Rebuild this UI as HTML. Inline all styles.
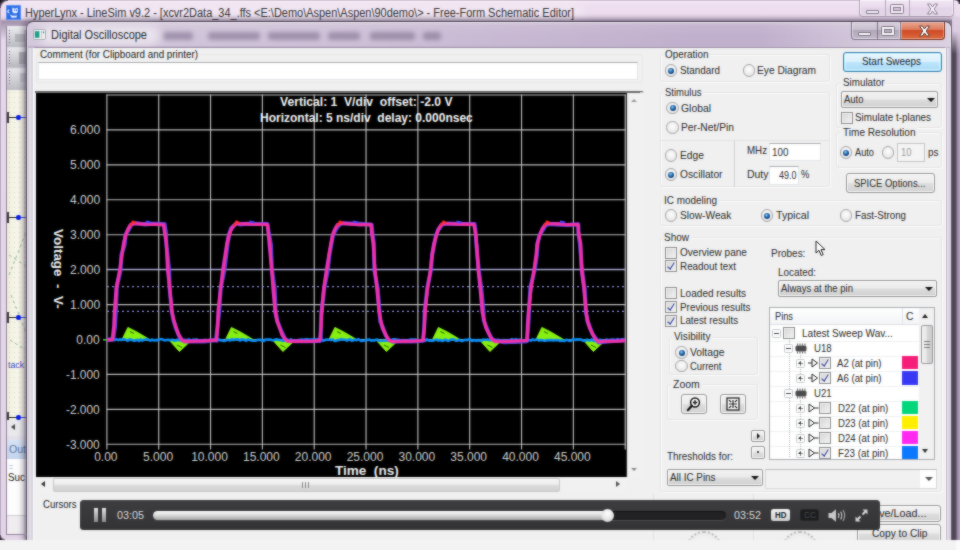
<!DOCTYPE html>
<html><head><meta charset="utf-8"><title>Digital Oscilloscope</title>
<style>
html,body{margin:0;padding:0;}
body{width:960px;height:550px;overflow:hidden;position:relative;background:#f3f3f3;font-family:"Liberation Sans", sans-serif;}
#root{position:absolute;left:0;top:0;width:960px;height:550px;overflow:hidden;}
.t{position:absolute;white-space:pre;line-height:1;transform:translateY(-50%);transform-origin:0 50%;margin-top:-0.4px;font-family:"Liberation Sans", sans-serif;}

.gb{position:absolute;border:1px solid #e4e4e4;box-shadow:inset 1px 1px 0 rgba(255,255,255,.7),1px 1px 0 rgba(255,255,255,.7);border-radius:3px;box-sizing:border-box;}
.wh{position:absolute;background:#fff;border:1px solid #e3e6ea;border-top-color:#abadb3;box-sizing:border-box;}
.btn{position:absolute;box-sizing:border-box;border:1px solid #989898;border-radius:3px;background:linear-gradient(#f4f4f4 0%,#ececec 48%,#dedede 52%,#d2d2d2 100%);box-shadow:inset 0 0 0 1px rgba(255,255,255,.75);}
.cmb{position:absolute;box-sizing:border-box;border:1px solid #989898;border-radius:2px;background:linear-gradient(#f2f2f2 0%,#ebebeb 48%,#dddddd 52%,#cfcfcf 100%);box-shadow:inset 0 0 0 1px rgba(255,255,255,.7);}
.arr{position:absolute;width:0;height:0;border-left:4px solid transparent;border-right:4px solid transparent;border-top:4px solid #111;}
.rd{position:absolute;width:12.5px;height:12.5px;border-radius:50%;box-sizing:border-box;border:1px solid #a6a6a6;background:radial-gradient(circle at 50% 40%,#fdfdfd 0%,#ececec 60%,#d8d8d8 100%);}
.rd.on::after{content:"";position:absolute;left:2.25px;top:2.25px;width:6px;height:6px;border-radius:50%;background:radial-gradient(circle at 42% 36%,#9fd4f4 0%,#2068ac 38%,#0a3266 80%);}
.cb{position:absolute;width:12px;height:12px;box-sizing:border-box;border:1px solid #8e8f8f;background:linear-gradient(135deg,#d4d4d4 0%,#f4f4f4 100%);box-shadow:inset 0 0 0 1px #f0f0f0;}
.cb.on::after{content:"";position:absolute;left:3px;top:0px;width:3px;height:7px;border:solid #2a3a9a;border-width:0 1.6px 1.6px 0;transform:rotate(40deg) skewX(8deg);}

</style></head><body><div id="root">
<div style="position:absolute;left:0px;top:0px;width:960px;height:540px;background:linear-gradient(180deg,#b9a7bf 0px,#f5eaf6 1.5px,#eedff0 4px,#ecdcee 15px,#e2d3e6 18px,#c9b9d0 20px,#a292aa 21px,#e6d9ea 40px,#e2d5e6 540px);"></div><div style="position:absolute;left:955px;top:0px;width:5px;height:4px;background:radial-gradient(circle at 0% 100%,rgba(0,0,0,0) 0,rgba(0,0,0,0) 3.2px,#5a4a60 4.2px,#2a2230 5.5px);"></div><div style="position:absolute;left:20px;top:3px;width:565px;height:19px;background:rgba(255,255,255,.28);filter:blur(5px);border-radius:9px;"></div><div style="position:absolute;left:0px;top:0px;width:8px;height:8px;background:radial-gradient(circle at 100% 100%,rgba(0,0,0,0) 0,rgba(0,0,0,0) 6.5px,#6a5a70 7.5px,#221c26 9.5px);"></div><div style="position:absolute;left:0px;top:8px;width:1px;height:527px;background:#b8a8c0;"></div><div style="position:absolute;left:6px;top:26px;width:1px;height:509px;background:#8f8398;"></div><svg style="position:absolute;left:6px;top:5px" width="15" height="15" viewBox="0 0 15 15"><rect x="0" y="0" width="15" height="15" rx="1.5" fill="#2b6be6"/><rect x="0.5" y="0.5" width="14" height="14" rx="1.2" fill="none" stroke="#5c94f4" stroke-width="1"/><path d="M6.5 2.2L8 3.6H10.2L11.6 2.2L12 6.2L10.8 8.2H7.6L6.2 6.4Z" fill="#eef4ff"/><path d="M3.2 4.6L1.6 6.4L3.2 8.2" stroke="#dfeaff" stroke-width="1.1" fill="none"/><path d="M3.4 8.8Q5 11.2 8 10.8L11.2 10.4L10.4 12.6L5.6 12.8Z" fill="#f2f6ff"/><rect x="8.2" y="4.6" width="1.1" height="1.4" fill="#2b6be6"/><rect x="10" y="4.6" width="1.1" height="1.4" fill="#2b6be6"/></svg><span class="t" style="left:25px;top:13.3px;font-size:12px;color:#333;font-weight:normal;transform:translateY(-50%) scaleX(0.9136);">HyperLynx - LineSim v9.2 - [xcvr2Data_34_.ffs &lt;E:\Demo\Aspen\Aspen\90demo\&gt; - Free-Form Schematic Editor]</span><div style="position:absolute;left:859px;top:0px;width:95px;height:17px;border:1px solid #b3a2ba;border-top:none;border-radius:0 0 4px 4px;box-sizing:border-box;background:linear-gradient(#f0e5f2 0%,#eadcee 45%,#e3d3e8 50%,#e7d9eb 100%);box-shadow:inset 0 0 0 1px rgba(255,255,255,.55);"></div><div style="position:absolute;left:885px;top:0px;width:1px;height:16px;background:#b9a9c0;"></div><div style="position:absolute;left:909px;top:0px;width:1px;height:16px;background:#b9a9c0;"></div><div style="position:absolute;left:866px;top:10px;width:13px;height:4px;background:#f4eef6;border:1px solid #857a8d;box-sizing:border-box;border-radius:1px;"></div><div style="position:absolute;left:890px;top:4px;width:14px;height:10px;border:1px solid #857a8d;box-sizing:border-box;border-radius:1.5px;background:#f4eef6;"></div><div style="position:absolute;left:893px;top:7px;width:8px;height:4px;border:1px solid #857a8d;box-sizing:border-box;background:#d9c6e0;"></div><svg style="position:absolute;left:926px;top:3px" width="13" height="12" viewBox="0 0 13 12"><path d="M1.5 1 L4.5 1 L6.5 4 L8.5 1 L11.5 1 L8.2 6 L11.5 11 L8.5 11 L6.5 8 L4.5 11 L1.5 11 L4.8 6 Z" fill="#f8f3fa" stroke="#8a7f92" stroke-width="1"/></svg><div style="position:absolute;left:7px;top:26px;width:23px;height:64px;background:linear-gradient(#ececf0 0%,#bcbcc4 32%,#e8e8ec 34%,#b8b8c0 64%,#e6e6ea 67%,#bcbcc4 100%);"></div><div style="position:absolute;left:9px;top:30px;width:2px;height:14px;background:repeating-linear-gradient(#70707a 0 1px,transparent 1px 3px);width:1.2px;"></div><div style="position:absolute;left:9px;top:51px;width:2px;height:14px;background:repeating-linear-gradient(#70707a 0 1px,transparent 1px 3px);width:1.2px;"></div><div style="position:absolute;left:9px;top:71px;width:2px;height:14px;background:repeating-linear-gradient(#70707a 0 1px,transparent 1px 3px);width:1.2px;"></div><div style="position:absolute;left:15px;top:34px;width:10px;height:8px;background:#9a9aa2;opacity:.55;"></div><div style="position:absolute;left:19px;top:52px;width:8px;height:12px;background:#8c8c94;opacity:.6;"></div><div style="position:absolute;left:20px;top:73px;width:7px;height:9px;background:#b4b4bc;opacity:.7;"></div><div style="position:absolute;left:7px;top:90px;width:23px;height:330px;background:linear-gradient(90deg,#efeedd 0%,#f8f7ea 45%,#f3f2e2 100%);"></div><div style="position:absolute;left:7px;top:90px;width:23px;height:330px;background-image:radial-gradient(#cfcdb6 0.5px,transparent 0.8px);background-size:5px 5px;opacity:.8;"></div><svg style="position:absolute;left:7px;top:90px" width="23" height="330" viewBox="0 0 23 330"><g stroke="#8fb79a" stroke-width="1" stroke-dasharray="3 3" fill="none"><path d="M2 185L22 135"/><path d="M4 205L22 250"/><path d="M2 165L22 178"/><path d="M3 250L22 262"/></g></svg><div style="position:absolute;left:7px;top:117px;width:2px;height:1px;background:#111;height:1px;"></div><div style="position:absolute;left:8px;top:117px;width:18px;height:1px;background:#222;"></div><div style="position:absolute;left:7px;top:112px;width:1.5px;height:11px;background:#3a3a3a;"></div><div style="position:absolute;left:16.2px;top:115.2px;width:4.600000000000001px;height:4.599999999999994px;background:#0018e8;border-radius:50%;"></div><div style="position:absolute;left:20px;top:117px;width:10px;height:1px;background:#2a3cff;"></div><div style="position:absolute;left:7px;top:217px;width:2px;height:1px;background:#111;height:1px;"></div><div style="position:absolute;left:8px;top:217px;width:18px;height:1px;background:#222;"></div><div style="position:absolute;left:7px;top:212px;width:1.5px;height:11px;background:#3a3a3a;"></div><div style="position:absolute;left:16.2px;top:215.2px;width:4.600000000000001px;height:4.600000000000023px;background:#0018e8;border-radius:50%;"></div><div style="position:absolute;left:20px;top:217px;width:10px;height:1px;background:#2a3cff;"></div><div style="position:absolute;left:7px;top:317px;width:2px;height:1px;background:#111;height:1px;"></div><div style="position:absolute;left:8px;top:317px;width:18px;height:1px;background:#222;"></div><div style="position:absolute;left:7px;top:312px;width:1.5px;height:11px;background:#3a3a3a;"></div><div style="position:absolute;left:16.2px;top:315.2px;width:4.600000000000001px;height:4.600000000000023px;background:#0018e8;border-radius:50%;"></div><div style="position:absolute;left:20px;top:317px;width:10px;height:1px;background:#2a3cff;"></div><div style="position:absolute;left:7px;top:417px;width:2px;height:1px;background:#111;height:1px;"></div><div style="position:absolute;left:8px;top:417px;width:18px;height:1px;background:#222;"></div><div style="position:absolute;left:7px;top:412px;width:1.5px;height:11px;background:#3a3a3a;"></div><div style="position:absolute;left:16.2px;top:415.2px;width:4.600000000000001px;height:4.600000000000023px;background:#0018e8;border-radius:50%;"></div><div style="position:absolute;left:20px;top:417px;width:10px;height:1px;background:#2a3cff;"></div><span class="t" style="left:8px;top:365px;font-size:9px;color:#3a48c8;font-weight:normal;transform:translateY(-50%) scaleX(0.9688);">tack</span><div style="position:absolute;left:7px;top:420px;width:23px;height:16px;background:#e9e9ec;"></div><div style="position:absolute;left:11px;top:424px;width:0;height:0;border-top:3.5px solid transparent;border-bottom:3.5px solid transparent;border-right:4px solid #444;"></div><div style="position:absolute;left:7px;top:436px;width:23px;height:4px;background:#e4e0ea;"></div><div style="position:absolute;left:7px;top:440px;width:23px;height:19px;background:linear-gradient(#d7e3f4,#c3d4ec);"></div><span class="t" style="left:9px;top:449px;font-size:11px;color:#5a78a8;font-weight:normal;transform:translateY(-50%) scaleX(0.9586);">Out</span><div style="position:absolute;left:7px;top:459px;width:23px;height:56px;background:#fdfdfd;"></div><span class="t" style="left:9px;top:467px;font-size:8px;color:#333;font-weight:normal;transform:translateY(-50%) scaleX(0.8982);">::</span><span class="t" style="left:8px;top:477px;font-size:10.5px;color:#222;font-weight:normal;transform:translateY(-50%) scaleX(0.9396);">Suc</span><div style="position:absolute;left:7px;top:515px;width:23px;height:19px;background:#f0edf1;border-top:1px solid #cfcfcf;box-sizing:border-box;"></div><div style="position:absolute;left:22px;top:18px;width:936px;height:526px;border-radius:9px;background:rgba(40,25,50,.30);filter:blur(2.5px);"></div><div style="position:absolute;left:26px;top:21px;width:926px;height:524px;border-radius:7px 7px 0 0;border:1.3px solid #6a5c75;border-top:1.6px solid #4f4459;box-sizing:border-box;background:linear-gradient(180deg,#d8cbdf 0px,#c6b6d0 3px,#c1b0cd 14px,#c0b0cc 26px,#c4b6ce 60px,#c3b5cd 520px);box-shadow:inset 0 0 0 1px rgba(255,255,255,.55);"></div><div style="position:absolute;left:23px;top:30px;width:3.5px;height:510px;background:linear-gradient(90deg,rgba(60,55,70,0),rgba(60,55,70,.42));"></div><div style="position:absolute;left:27.6px;top:48px;width:5.399999999999999px;height:492px;background:linear-gradient(90deg,#cfcad6,#e6e3ea 45%,#cdc9d3 85%,#e8e8ea 100%);"></div><div style="position:absolute;left:952px;top:22px;width:8px;height:518px;background:linear-gradient(90deg,#4a424f 0%,#564c5e 48%,#8d7d99 62%,#bba9c5 100%);"></div><div style="position:absolute;left:952px;top:18px;width:8px;height:36px;background:linear-gradient(180deg,#dfd0e4 0%,#dccde2 35%,rgba(220,205,226,0) 100%);"></div><div style="position:absolute;left:946.5px;top:48px;width:4.5px;height:492px;background:linear-gradient(90deg,#e4dfe9,#d3cbdb);"></div><div style="position:absolute;left:28px;top:23px;width:672px;height:23px;background:linear-gradient(90deg,rgba(255,255,255,.30) 0%,rgba(255,255,255,.22) 45%,rgba(255,255,255,0) 100%);border-radius:6px 0 0 0;"></div><div style="position:absolute;left:760px;top:23px;width:191px;height:24px;background:linear-gradient(90deg,rgba(255,255,255,0) 0%,rgba(255,255,255,.32) 60%,rgba(255,255,255,.42) 100%);border-radius:0 6px 0 0;"></div><div style="position:absolute;left:163px;top:32px;width:30px;height:8px;background:#6f5f7e;opacity:.5;filter:blur(2px);border-radius:3px;"></div><div style="position:absolute;left:208px;top:32px;width:52px;height:8px;background:#6f5f7e;opacity:.5;filter:blur(2px);border-radius:3px;"></div><div style="position:absolute;left:268px;top:32px;width:52px;height:8px;background:#6f5f7e;opacity:.5;filter:blur(2px);border-radius:3px;"></div><div style="position:absolute;left:328px;top:32px;width:32px;height:8px;background:#6f5f7e;opacity:.5;filter:blur(2px);border-radius:3px;"></div><div style="position:absolute;left:370px;top:32px;width:45px;height:8px;background:#6f5f7e;opacity:.5;filter:blur(2px);border-radius:3px;"></div><div style="position:absolute;left:423px;top:32px;width:18px;height:8px;background:#6f5f7e;opacity:.5;filter:blur(2px);border-radius:3px;"></div><div style="position:absolute;left:40px;top:26px;width:120px;height:19px;background:rgba(255,255,255,.55);filter:blur(5px);border-radius:9px;"></div><svg style="position:absolute;left:33px;top:28.5px" width="13" height="11" viewBox="0 0 13 11"><rect x="0.5" y="0.5" width="12" height="10" rx="1.5" fill="#f2f4f3" stroke="#a9aeb4"/><rect x="1.8" y="2.2" width="4.6" height="6.6" fill="#1f9c88"/><rect x="8" y="2.5" width="1.2" height="1.2" fill="#3a9ad0"/><rect x="10" y="2.5" width="1.2" height="1.8" fill="#2a8a9a"/><rect x="8" y="5" width="1.2" height="1.2" fill="#d0a0a0"/><rect x="8" y="7.4" width="1.2" height="1.2" fill="#e08080"/></svg><span class="t" style="left:51px;top:35.3px;font-size:12px;color:#2a2a2a;font-weight:normal;transform:translateY(-50%) scaleX(0.9167);">Digital Oscilloscope</span><div style="position:absolute;left:851px;top:22px;width:50px;height:18px;border:1px solid #7d7286;border-top:none;border-radius:0 0 0 4px;box-sizing:border-box;background:linear-gradient(#d9d0de 0%,#c9c0cf 45%,#b1a8b8 50%,#c2b8c9 100%);box-shadow:inset 0 0 0 1px rgba(255,255,255,.5);"></div><div style="position:absolute;left:901px;top:22px;width:44px;height:18px;border:1px solid #7b3423;border-top:none;border-left:none;border-radius:0 0 4px 0;box-sizing:border-box;background:linear-gradient(#e9a791 0%,#dd7a5c 45%,#cf4a27 50%,#dd6a3c 100%);box-shadow:inset 0 0 0 1px rgba(255,255,255,.35);"></div><div style="position:absolute;left:877px;top:22px;width:1px;height:17px;background:#7d7286;"></div><div style="position:absolute;left:858px;top:32px;width:13px;height:4px;background:#fbfbfb;border:1px solid #7a7183;box-sizing:border-box;border-radius:1px;"></div><div style="position:absolute;left:881px;top:26px;width:14px;height:10px;border:1px solid #7a7183;box-sizing:border-box;border-radius:1.5px;background:#f8f8f8;"></div><div style="position:absolute;left:884px;top:29px;width:8px;height:4px;border:1px solid #7a7183;box-sizing:border-box;background:#b9b0c0;"></div><svg style="position:absolute;left:918px;top:25px" width="13" height="12" viewBox="0 0 13 12"><path d="M1.5 1 L4.5 1 L6.5 4 L8.5 1 L11.5 1 L8.2 6 L11.5 11 L8.5 11 L6.5 8 L4.5 11 L1.5 11 L4.8 6 Z" fill="#ffffff" stroke="#5c3a36" stroke-width="1"/></svg><div style="position:absolute;left:33px;top:47px;width:913px;height:498px;background:#f0f0f0;border:1px solid #fbfbfb;border-top:1px solid #9f93a8;box-sizing:border-box;"></div><div style="position:absolute;left:36px;top:54px;width:606.5px;height:28.5px;border:1px solid #e6e6e6;border-radius:3px;box-sizing:border-box;"></div><div style="position:absolute;left:38.5px;top:48px;width:161.5px;height:12px;background:#f0f0f0;"></div><span class="t" style="left:40px;top:54px;font-size:11px;color:#222;font-weight:normal;transform:translateY(-50%) scaleX(0.8942);">Comment (for Clipboard and printer)</span><div class="wh" style="left:38px;top:62px;width:600px;height:18px;"></div><svg style="position:absolute;left:36px;top:92px" width="590.8" height="385" viewBox="36 92 590.8 385"><rect x="36" y="92" width="590.8" height="385" fill="#000"/><g stroke="#bcbcbc" stroke-width="1.15" fill="none"><path d="M106.90 94.5V449.5"/><path d="M158.73 94.5V449.5"/><path d="M210.56 94.5V449.5"/><path d="M262.39 94.5V449.5"/><path d="M314.22 94.5V449.5"/><path d="M366.05 94.5V449.5"/><path d="M417.88 94.5V449.5"/><path d="M469.71 94.5V449.5"/><path d="M521.54 94.5V449.5"/><path d="M573.37 94.5V449.5"/><path d="M625.20 94.5V449.5"/><path d="M106.50 444.30H625.7"/><path d="M106.50 409.37H625.7"/><path d="M106.50 374.44H625.7"/><path d="M106.50 339.51H625.7"/><path d="M106.50 304.58H625.7"/><path d="M106.50 269.65H625.7"/><path d="M106.50 234.72H625.7"/><path d="M106.50 199.79H625.7"/><path d="M106.50 164.86H625.7"/><path d="M106.50 129.93H625.7"/><path d="M106.50 95.00H625.7"/></g><path d="M107 269.3H625" stroke="#a6a6e8" stroke-width="1" fill="none"/><path d="M107 286.7H625" stroke="#8c8ce0" stroke-width="1.3" stroke-dasharray="2 3" fill="none"/><path d="M107 311.4H625" stroke="#8c8ce0" stroke-width="1.3" stroke-dasharray="2 3" fill="none"/><clipPath id="cp"><rect x="106" y="94" width="519" height="356"/></clipPath><g clip-path="url(#cp)"><path d="M121.9 339.8L127.9 327.5L136.9 332L150.9 340.3Z" fill="#86f010" stroke="#86f010" stroke-width="1"/><path d="M129.9 331.5L133.9 333.5" stroke="#2c5a00" stroke-width="1"/><path d="M168.9 339.8L190.9 340.8L179.4 351.5Z" fill="#86f010" stroke="#86f010" stroke-width="1"/><path d="M176.9 345L181.9 347.5" stroke="#2c5a00" stroke-width="1"/><path d="M225.4 339.8L231.4 327.5L240.4 332L254.4 340.3Z" fill="#86f010" stroke="#86f010" stroke-width="1"/><path d="M233.4 331.5L237.4 333.5" stroke="#2c5a00" stroke-width="1"/><path d="M272.4 339.8L294.4 340.8L282.9 351.5Z" fill="#86f010" stroke="#86f010" stroke-width="1"/><path d="M280.4 345L285.4 347.5" stroke="#2c5a00" stroke-width="1"/><path d="M328.9 339.8L334.9 327.5L343.9 332L357.9 340.3Z" fill="#86f010" stroke="#86f010" stroke-width="1"/><path d="M336.9 331.5L340.9 333.5" stroke="#2c5a00" stroke-width="1"/><path d="M375.9 339.8L397.9 340.8L386.4 351.5Z" fill="#86f010" stroke="#86f010" stroke-width="1"/><path d="M383.9 345L388.9 347.5" stroke="#2c5a00" stroke-width="1"/><path d="M432.4 339.8L438.4 327.5L447.4 332L461.4 340.3Z" fill="#86f010" stroke="#86f010" stroke-width="1"/><path d="M440.4 331.5L444.4 333.5" stroke="#2c5a00" stroke-width="1"/><path d="M479.4 339.8L501.4 340.8L489.9 351.5Z" fill="#86f010" stroke="#86f010" stroke-width="1"/><path d="M487.4 345L492.4 347.5" stroke="#2c5a00" stroke-width="1"/><path d="M535.9 339.8L541.9 327.5L550.9 332L564.9 340.3Z" fill="#86f010" stroke="#86f010" stroke-width="1"/><path d="M543.9 331.5L547.9 333.5" stroke="#2c5a00" stroke-width="1"/><path d="M582.9 339.8L604.9 340.8L593.4 351.5Z" fill="#86f010" stroke="#86f010" stroke-width="1"/><path d="M590.9 345L595.9 347.5" stroke="#2c5a00" stroke-width="1"/><path d="M107.0 339.8L108.6 339.5L110.2 340.4L111.8 339.3L113.4 340.2L115.0 339.9L116.6 339.3L118.2 340.1L119.8 339.3L121.4 340.0L123.0 339.3L124.6 339.4L126.2 340.0L127.8 340.7L129.4 339.4L131.0 339.6L132.6 340.3L134.2 340.9L135.8 340.2L137.4 339.9L139.0 341.0L140.6 339.3L142.2 340.7L143.8 339.7L145.4 339.5L147.0 339.4L148.6 339.8L150.2 340.7L151.8 339.5L153.4 340.2L155.0 340.4L156.6 339.9L158.2 340.2L159.8 339.3L161.4 339.3L163.0 339.6L164.6 340.4L166.2 340.0L167.8 339.8L169.4 340.3L171.0 340.0L172.6 339.7L174.2 340.6L175.8 340.5L177.4 339.6L179.0 340.2L180.6 340.1L182.2 340.8L183.8 340.5L185.4 339.7L187.0 341.0L188.6 339.4L190.2 340.0L191.8 340.6L193.4 339.5L195.0 340.1L196.6 339.3L198.2 340.4L199.8 340.6L201.4 340.2L203.0 340.8L204.6 339.8L206.2 340.5L207.8 340.3L209.4 340.2L211.0 340.0L212.6 340.7L214.2 340.9L215.8 340.1L217.4 340.4L219.0 339.3L220.6 340.5L222.2 340.4L223.8 341.0L225.4 340.7L227.0 339.7L228.6 339.9L230.2 340.4L231.8 339.2L233.4 340.0L235.0 339.5L236.6 339.4L238.2 339.3L239.8 340.6L241.4 339.4L243.0 339.6L244.6 339.9L246.2 340.8L247.8 339.3L249.4 340.0L251.0 340.2L252.6 340.8L254.2 340.7L255.8 340.8L257.4 339.7L259.0 339.9L260.6 339.8L262.2 340.8L263.8 340.9L265.4 339.5L267.0 339.5L268.6 339.6L270.2 339.6L271.8 340.1L273.4 340.3L275.0 339.7L276.6 339.2L278.2 340.0L279.8 339.9L281.4 340.2L283.0 340.9L284.6 340.4L286.2 340.1L287.8 340.3L289.4 340.4L291.0 339.3L292.6 340.8L294.2 340.6L295.8 340.8L297.4 340.6L299.0 339.9L300.6 339.9L302.2 339.4L303.8 340.3L305.4 339.3L307.0 339.3L308.6 339.6L310.2 339.5L311.8 339.8L313.4 339.3L315.0 339.2L316.6 339.5L318.2 339.4L319.8 339.9L321.4 339.2L323.0 340.8L324.6 340.3L326.2 339.5L327.8 339.7L329.4 339.8L331.0 339.9L332.6 339.4L334.2 340.7L335.8 341.0L337.4 340.0L339.0 340.1L340.6 339.4L342.2 339.4L343.8 339.8L345.4 339.7L347.0 340.7L348.6 339.5L350.2 339.2L351.8 340.9L353.4 340.2L355.0 339.5L356.6 340.2L358.2 339.2L359.8 340.2L361.4 341.0L363.0 340.8L364.6 340.5L366.2 339.7L367.8 339.9L369.4 339.5L371.0 340.6L372.6 340.2L374.2 340.6L375.8 339.8L377.4 339.6L379.0 340.7L380.6 341.0L382.2 340.7L383.8 340.7L385.4 340.7L387.0 340.5L388.6 339.6L390.2 340.1L391.8 339.8L393.4 339.3L395.0 339.3L396.6 339.7L398.2 339.7L399.8 340.4L401.4 340.9L403.0 340.0L404.6 340.9L406.2 341.0L407.8 340.9L409.4 339.9L411.0 339.6L412.6 339.6L414.2 339.6L415.8 339.6L417.4 340.3L419.0 340.8L420.6 340.7L422.2 340.1L423.8 340.4L425.4 340.6L427.0 339.4L428.6 340.4L430.2 340.8L431.8 340.6L433.4 340.6L435.0 340.1L436.6 339.5L438.2 340.6L439.8 339.8L441.4 340.6L443.0 340.9L444.6 339.9L446.2 339.9L447.8 340.9L449.4 340.5L451.0 339.5L452.6 339.4L454.2 339.5L455.8 340.8L457.4 340.7L459.0 339.5L460.6 340.7L462.2 341.0L463.8 340.4L465.4 339.8L467.0 340.2L468.6 339.4L470.2 339.2L471.8 340.9L473.4 340.4L475.0 340.1L476.6 340.9L478.2 340.0L479.8 340.8L481.4 340.7L483.0 339.6L484.6 339.7L486.2 339.7L487.8 339.6L489.4 340.3L491.0 339.7L492.6 340.0L494.2 339.4L495.8 340.8L497.4 339.8L499.0 340.0L500.6 340.3L502.2 340.8L503.8 340.0L505.4 340.9L507.0 340.1L508.6 340.2L510.2 340.1L511.8 339.2L513.4 340.0L515.0 339.5L516.6 339.2L518.2 340.6L519.8 339.5L521.4 340.1L523.0 340.5L524.6 340.2L526.2 339.8L527.8 340.1L529.4 340.2L531.0 340.6L532.6 339.4L534.2 340.2L535.8 339.6L537.4 339.7L539.0 340.6L540.6 340.1L542.2 340.2L543.8 340.6L545.4 340.8L547.0 340.0L548.6 340.3L550.2 340.1L551.8 340.1L553.4 340.4L555.0 340.0L556.6 340.2L558.2 340.1L559.8 340.9L561.4 340.5L563.0 340.8L564.6 340.9L566.2 339.7L567.8 340.2L569.4 340.9L571.0 340.7L572.6 339.4L574.2 339.4L575.8 340.0L577.4 339.3L579.0 339.6L580.6 339.3L582.2 340.4L583.8 340.6L585.4 340.8L587.0 339.5L588.6 340.5L590.2 340.4L591.8 339.5L593.4 340.8L595.0 340.9L596.6 339.6L598.2 340.9L599.8 339.9L601.4 340.1L603.0 341.0L604.6 340.7L606.2 339.5L607.8 340.0L609.4 340.1L611.0 339.8L612.6 339.6L614.2 339.8L615.8 340.5L617.4 339.2L619.0 340.2L620.6 340.0L622.2 339.2L623.8 339.8L625.4 340.3" stroke="#0a8cf6" stroke-width="2.6" fill="none" stroke-linejoin="round" stroke-linecap="round" opacity="1.0"/><path d="M107.0 339.8L113.1 339.1L115.0 326.6L115.9 311.4L116.8 286.8L120.6 269.7L121.4 255.0L124.6 244.7L125.7 234.5L129.0 229.2L131.5 224.4L133.2 223.7L135.5 222.9L143.9 224.4L153.6 223.8L164.6 223.9L166.0 233.0L166.3 243.8L169.1 269.5L169.7 289.1L171.9 311.3L173.5 320.3L175.7 327.7L178.7 335.1L181.6 339.6L184.3 341.4L192.2 341.2L204.2 341.5L216.2 339.9L216.6 340.7L215.9 340.5L217.5 326.1L219.2 311.9L220.7 287.9L224.5 269.8L226.2 255.5L227.6 243.9L229.3 234.3L231.0 228.3L235.0 224.7L236.9 222.7L239.7 224.4L246.9 223.8L256.1 224.1L267.4 224.1L268.7 232.7L270.9 244.6L271.9 269.4L274.7 288.8L275.6 311.1L277.4 321.1L279.7 327.5L282.6 333.7L285.1 338.9L288.2 340.9L295.7 341.2L308.1 341.3L319.7 341.0L320.4 340.3L320.8 339.7L320.8 327.0L321.5 312.5L324.5 286.8L327.7 270.8L329.3 255.5L331.5 243.5L333.1 235.1L335.8 229.6L338.7 225.3L341.7 223.7L342.9 223.2L349.3 223.5L359.8 223.8L371.6 224.8L372.5 233.3L373.9 243.7L374.4 270.4L377.8 289.1L379.5 312.3L380.3 321.5L382.8 327.2L385.7 335.0L388.5 340.0L392.8 341.7L399.9 341.6L412.4 341.6L423.3 340.8L422.8 339.3L423.2 340.3L424.2 326.2L424.7 311.3L427.3 287.9L430.9 270.4L432.2 255.1L434.3 244.0L435.9 235.8L438.2 230.0L442.4 224.2L444.4 224.0L446.9 223.6L453.2 223.7L464.4 224.0L474.6 224.1L475.8 233.9L476.4 244.3L478.8 270.6L481.3 288.6L483.6 312.0L483.7 320.2L486.7 327.9L489.2 334.0L492.2 339.3L496.0 340.8L504.1 342.2L514.9 341.9L527.0 341.2L526.7 339.7L526.9 340.8L528.3 325.8L529.0 311.7L530.4 286.9L534.7 269.7L536.9 254.6L537.5 244.1L539.5 234.9L543.0 229.8L545.7 225.3L548.7 224.2L549.7 224.1L556.3 224.6L567.0 225.0L578.3 224.3L578.5 233.9L579.9 243.6L582.0 269.5L584.8 290.0L586.0 312.3L587.7 321.2L590.0 327.4L592.5 334.1L596.7 339.6L598.4 342.4L608.0 341.5L618.5 340.5L629.4 340.2L629.9 339.4L630.2 340.0L632.3 326.5L632.4 311.9L634.7 287.4L637.3 269.3L639.2 255.9L640.7 244.1L643.8 235.8L645.2 228.7L648.1 224.9L651.4 224.2L653.7 224.4L659.7 223.4L671.0 225.2L681.5 224.9L681.9 232.9L684.9 244.3L686.4 270.8L687.4 288.4L689.3 312.0L691.9 321.9L694.1 328.3L697.1 334.5L699.6 338.8L702.9 341.2L711.4 341.9L722.2 340.4L733.2 340.7L734.5 339.2" stroke="#6a48ee" stroke-width="4.0" fill="none" stroke-linejoin="round" stroke-linecap="round" opacity="0.9"/><path d="M107.0 339.8L112.3 339.8L113.8 325.9L114.4 312.1L116.3 287.3L119.7 270.5L121.8 255.4L123.5 243.7L125.4 235.5L128.0 228.8L130.2 225.0L133.8 223.2L135.0 223.8L143.1 223.8L152.2 224.2L163.5 224.8L164.6 233.3L166.4 243.6L167.6 270.3L169.8 289.3L171.7 311.6L174.0 320.8L176.3 327.9L178.4 334.2L181.5 339.7L184.9 341.2L192.6 341.2L205.2 340.6L215.3 340.0L216.1 340.2L216.6 340.0L217.7 326.4L218.0 311.7L220.7 287.7L222.7 270.2L225.1 254.9L226.8 243.7L228.7 234.8L231.2 229.5L233.8 225.5L236.8 223.2L239.0 223.9L246.1 223.6L256.2 224.3L267.5 224.3L268.3 233.4L269.2 243.5L271.7 270.1L273.0 288.5L275.1 312.3L277.0 321.2L279.7 327.7L282.0 335.0L285.2 339.3L288.2 341.4L296.0 341.0L308.5 341.4L319.3 340.8L319.2 339.5L319.7 340.3L321.2 325.9L321.5 311.9L323.8 287.9L326.4 270.3L328.9 255.3L330.8 244.1L332.5 234.8L334.7 229.3L337.3 224.7L340.9 223.0L341.8 223.1L349.8 223.9L360.2 224.8L371.1 224.4L371.5 232.6L373.2 243.8L374.8 269.5L376.9 289.1L379.2 312.1L381.0 321.2L382.4 328.2L385.5 334.6L388.5 339.7L391.2 341.3L399.4 341.2L412.1 341.1L422.5 340.3L423.7 339.8L422.9 340.1L424.4 326.5L424.8 312.0L427.6 287.8L430.6 269.5L432.0 254.6L433.7 244.5L436.3 235.4L438.2 229.4L441.1 224.8L444.4 223.7L445.3 223.7L453.3 223.8L463.1 224.0L473.8 224.4L475.5 233.2L476.4 243.1L478.2 270.0L480.2 288.8L482.2 312.2L484.2 320.6L485.9 327.8L489.3 334.6L491.7 339.2L495.2 341.5L503.0 341.3L515.7 340.8L526.3 340.3L526.6 340.2L527.2 339.7L527.4 326.2L528.4 311.5L531.2 287.4L534.0 269.9L536.1 255.0L537.2 243.5L539.8 235.1L542.2 228.6L544.8 224.9L547.6 222.9L549.0 223.6L557.1 223.7L566.7 224.7L578.1 224.3L578.5 233.4L580.7 243.6L581.5 270.2L583.9 289.4L586.1 312.2L587.4 321.3L589.5 327.8L593.0 334.8L595.3 339.2L598.4 341.6L606.6 341.1L618.4 341.2L630.1 339.9L630.3 340.1L629.7 340.1L630.8 326.1L632.3 312.1L634.1 287.4L637.3 269.9L639.4 254.9L640.9 243.5L643.3 235.0L645.0 229.3L648.5 225.0L650.8 223.3L652.3 223.2L660.1 223.7L670.1 224.4L680.6 224.7L682.0 233.2L684.0 243.6L685.0 269.8L687.4 289.5L689.1 312.3L691.7 321.2L693.6 327.6L696.7 334.5L699.6 339.9L701.7 341.9L710.6 341.1L722.1 341.3L732.9 340.8L733.5 340.1" stroke="#d838d8" stroke-width="3.3" fill="none" stroke-linejoin="round" stroke-linecap="round" opacity="1"/><path d="M107.0 339.8L112.9 340.0L114.1 326.1L114.9 312.2L117.0 287.6L119.9 270.1L122.1 255.3L123.9 244.1L126.1 235.1L128.1 229.2L131.0 225.3L133.9 223.5L135.6 223.7L143.1 224.3L153.0 224.7L163.8 224.9L165.2 233.2L166.6 243.8L168.1 270.1L170.2 289.3L172.2 312.1L174.1 321.2L176.1 328.0L178.9 334.6L181.8 339.7L184.8 341.8L193.1 341.6L204.9 341.2L215.9 340.5L216.5 339.9L216.5 339.9L217.5 326.2L218.4 312.2L220.6 287.6L223.6 270.1L225.4 255.1L227.3 244.3L229.6 235.2L231.5 229.1L234.5 225.2L237.4 223.5L239.0 223.9L246.6 224.2L256.6 224.5L267.4 224.8L268.6 233.1L270.1 243.7L271.7 270.1L273.7 289.1L275.8 312.1L277.5 321.3L279.5 328.0L282.4 334.6L285.5 339.8L288.4 341.7L296.6 341.8L308.5 341.3L319.5 340.5L319.9 339.9L319.9 340.0L321.1 326.3L322.1 312.3L324.0 287.7L327.0 270.3L329.0 255.1L330.8 244.3L332.9 235.3L335.0 229.1L337.9 225.3L341.0 223.6L342.4 223.9L349.9 224.2L360.1 224.6L371.0 224.8L372.3 233.2L373.6 243.9L375.3 270.0L377.4 289.2L379.2 312.0L381.0 321.1L383.2 328.0L385.9 334.6L389.0 339.7L391.7 341.7L399.9 341.8L412.0 341.3L423.1 340.5L423.5 340.0L423.6 340.1L424.6 326.1L425.6 312.3L427.7 287.6L430.4 270.1L432.4 255.3L434.4 244.2L436.6 235.2L438.5 229.1L441.4 225.3L444.3 223.4L446.0 223.7L453.4 224.2L463.6 224.6L474.3 224.9L475.7 233.3L477.0 243.7L478.7 270.0L480.9 289.2L482.9 312.1L484.4 321.3L486.5 328.2L489.4 334.6L492.3 339.8L495.4 341.7L503.5 341.7L515.6 341.1L526.5 340.6L527.1 339.9L527.1 339.9L527.9 326.3L529.0 312.1L531.1 287.6L534.1 270.3L536.1 255.2L537.8 244.2L540.0 235.3L542.0 229.3L544.9 225.1L547.8 223.6L549.5 223.8L557.1 224.2L567.0 224.6L578.0 224.9L579.2 233.2L580.4 243.7L582.3 270.0L584.4 289.1L586.3 312.2L588.0 321.1L590.1 328.2L592.9 334.6L595.8 339.8L598.9 341.7L606.9 341.6L618.9 341.2L629.9 340.5L630.4 340.1L630.6 339.9L631.6 326.1L632.5 312.3L634.7 287.8L637.5 270.1L639.5 255.1L641.2 244.2L643.4 235.2L645.7 229.3L648.5 225.2L651.4 223.4L653.0 223.8L660.6 224.4L670.5 224.6L681.5 224.8L682.6 233.3L684.1 243.9L685.8 270.1L687.9 289.2L689.8 312.0L691.5 321.1L693.6 328.2L696.6 334.7L699.3 339.7L702.3 341.8L710.5 341.8L722.6 341.1L733.5 340.7L734.0 340.0" stroke="#f6309c" stroke-width="2.3" fill="none" stroke-linejoin="round" stroke-linecap="round" opacity="1"/><path d="M129.9 226L132.9 221.5L135.9 223" stroke="#ff2a2a" stroke-width="2" fill="none"/><path d="M145.9 221.5L150.9 222.5" stroke="#4a46ff" stroke-width="2" fill="none"/><path d="M233.4 226L236.4 221.5L239.4 223" stroke="#ff2a2a" stroke-width="2" fill="none"/><path d="M249.4 221.5L254.4 222.5" stroke="#4a46ff" stroke-width="2" fill="none"/><path d="M336.9 226L339.9 221.5L342.9 223" stroke="#ff2a2a" stroke-width="2" fill="none"/><path d="M352.9 221.5L357.9 222.5" stroke="#4a46ff" stroke-width="2" fill="none"/><path d="M440.4 226L443.4 221.5L446.4 223" stroke="#ff2a2a" stroke-width="2" fill="none"/><path d="M456.4 221.5L461.4 222.5" stroke="#4a46ff" stroke-width="2" fill="none"/><path d="M543.9 226L546.9 221.5L549.9 223" stroke="#ff2a2a" stroke-width="2" fill="none"/><path d="M559.9 221.5L564.9 222.5" stroke="#4a46ff" stroke-width="2" fill="none"/></g><path d="M103 339.8H107" stroke="#30d030" stroke-width="1.6"/></svg><span class="t" style="left:280px;top:102.5px;font-size:12px;color:#f4f4f4;font-weight:bold;transform:translateY(-50%) scaleX(1.0103);">Vertical: 1  V/div  offset: -2.0 V</span><span class="t" style="left:260px;top:118.5px;font-size:12px;color:#f4f4f4;font-weight:bold;">Horizontal: 5 ns/div  delay: 0.000nsec</span><span class="t" style="left:66.0px;top:445.2px;font-size:12px;color:#d0d0d0;font-weight:normal;transform:translateY(-50%) scaleX(0.9903);">-3.000</span><span class="t" style="left:66.0px;top:410.27px;font-size:12px;color:#d0d0d0;font-weight:normal;transform:translateY(-50%) scaleX(0.9903);">-2.000</span><span class="t" style="left:66.0px;top:375.34px;font-size:12px;color:#d0d0d0;font-weight:normal;transform:translateY(-50%) scaleX(0.9903);">-1.000</span><span class="t" style="left:76.30000000000001px;top:340.40999999999997px;font-size:12px;color:#d0d0d0;font-weight:normal;">0.00</span><span class="t" style="left:69.5px;top:305.48px;font-size:12px;color:#d0d0d0;font-weight:normal;transform:translateY(-50%) scaleX(1.0056);">1.000</span><span class="t" style="left:69.5px;top:270.54999999999995px;font-size:12px;color:#d0d0d0;font-weight:normal;transform:translateY(-50%) scaleX(1.0056);">2.000</span><span class="t" style="left:69.5px;top:235.62000000000003px;font-size:12px;color:#d0d0d0;font-weight:normal;transform:translateY(-50%) scaleX(1.0056);">3.000</span><span class="t" style="left:69.5px;top:200.69000000000003px;font-size:12px;color:#d0d0d0;font-weight:normal;transform:translateY(-50%) scaleX(1.0056);">4.000</span><span class="t" style="left:69.5px;top:165.76000000000002px;font-size:12px;color:#d0d0d0;font-weight:normal;transform:translateY(-50%) scaleX(1.0056);">5.000</span><span class="t" style="left:69.5px;top:130.83px;font-size:12px;color:#d0d0d0;font-weight:normal;transform:translateY(-50%) scaleX(1.0056);">6.000</span><span class="t" style="left:94.2px;top:457.6px;font-size:12px;color:#d0d0d0;font-weight:normal;">0.00</span><span class="t" style="left:142.63000000000002px;top:457.6px;font-size:12px;color:#d0d0d0;font-weight:normal;transform:translateY(-50%) scaleX(1.0056);">5.000</span><span class="t" style="left:191.16px;top:457.6px;font-size:12px;color:#d0d0d0;font-weight:normal;">10.000</span><span class="t" style="left:242.98999999999998px;top:457.6px;font-size:12px;color:#d0d0d0;font-weight:normal;">15.000</span><span class="t" style="left:294.82000000000005px;top:457.6px;font-size:12px;color:#d0d0d0;font-weight:normal;">20.000</span><span class="t" style="left:346.65px;top:457.6px;font-size:12px;color:#d0d0d0;font-weight:normal;">25.000</span><span class="t" style="left:398.48px;top:457.6px;font-size:12px;color:#d0d0d0;font-weight:normal;">30.000</span><span class="t" style="left:450.31000000000006px;top:457.6px;font-size:12px;color:#d0d0d0;font-weight:normal;">35.000</span><span class="t" style="left:502.14px;top:457.6px;font-size:12px;color:#d0d0d0;font-weight:normal;">40.000</span><span class="t" style="left:553.97px;top:457.6px;font-size:12px;color:#d0d0d0;font-weight:normal;">45.000</span><span class="t" style="left:334.6px;top:470.6px;font-size:13px;color:#eee;font-weight:bold;transform:translateY(-50%) scaleX(1.0413);">Time  (ns)</span><span class="t" style="left:0px;top:0px;font-size:13px;color:#f2f2f2;font-weight:bold;left:58px;top:229.6px;transform-origin:0 50%;transform:translateY(-50%) rotate(90deg) scaleX(1.0342);">Voltage  -  V-</span><div style="position:absolute;left:626.8px;top:92px;width:16.200000000000045px;height:385px;background:#f1f1f1;border-left:1px solid #e2e2e2;box-sizing:border-box;"></div><div style="position:absolute;left:631px;top:99px;width:0;height:0;border-left:3.5px solid transparent;border-right:3.5px solid transparent;border-bottom:3.5px solid #9a9a9a;"></div><div style="position:absolute;left:631px;top:468px;width:0;height:0;border-left:3.5px solid transparent;border-right:3.5px solid transparent;border-top:3.5px solid #8a8a8a;"></div><div style="position:absolute;left:35px;top:91.3px;width:608px;height:1.5px;background:#6a6a6a;"></div><div style="position:absolute;left:36px;top:477px;width:590px;height:16px;background:#f1f1f1;"></div><div style="position:absolute;left:53px;top:478px;width:507px;height:14px;border:1px solid #c9c9c9;border-radius:2px;box-sizing:border-box;background:linear-gradient(#f6f6f6 0%,#ececec 45%,#dadada 55%,#d2d2d2 100%);"></div><div style="position:absolute;left:41px;top:481px;width:0;height:0;border-top:3.5px solid transparent;border-bottom:3.5px solid transparent;border-right:4px solid #333;"></div><div style="position:absolute;left:616px;top:481px;width:0;height:0;border-top:3.5px solid transparent;border-bottom:3.5px solid transparent;border-left:4px solid #555;"></div><div style="position:absolute;left:302px;top:482px;width:1px;height:6px;background:#8a8a8a;"></div><div style="position:absolute;left:305px;top:482px;width:1px;height:6px;background:#8a8a8a;"></div><div style="position:absolute;left:308px;top:482px;width:1px;height:6px;background:#8a8a8a;"></div><span class="t" style="left:42.5px;top:504px;font-size:11px;color:#222;font-weight:normal;transform:translateY(-50%) scaleX(0.8698);">Cursors</span><div style="position:absolute;left:640px;top:92px;width:4px;height:1px;background:#cfcfcf;"></div><div class="gb" style="left:660px;top:54px;width:170px;height:28px;"></div><div style="position:absolute;left:662.5px;top:48px;width:47.5px;height:12px;background:#f0f0f0;"></div><span class="t" style="left:664.5px;top:54px;font-size:11px;color:#2a2a2a;font-weight:normal;transform:translateY(-50%) scaleX(0.9004);">Operation</span><div class="rd on" style="left:664.75px;top:64.25px;"></div><span class="t" style="left:680px;top:70.5px;font-size:11px;color:#2a2a2a;font-weight:normal;transform:translateY(-50%) scaleX(0.8957);">Standard</span><div class="rd" style="left:742.75px;top:64.25px;"></div><span class="t" style="left:757px;top:70.5px;font-size:11px;color:#2a2a2a;font-weight:normal;transform:translateY(-50%) scaleX(0.9280);">Eye Diagram</span><div class="gb" style="left:660px;top:92px;width:170px;height:95px;"></div><div style="position:absolute;left:662.5px;top:86px;width:40.5px;height:12px;background:#f0f0f0;"></div><span class="t" style="left:664.5px;top:92px;font-size:11px;color:#2a2a2a;font-weight:normal;transform:translateY(-50%) scaleX(0.8652);">Stimulus</span><div class="rd on" style="left:666.25px;top:101.75px;"></div><span class="t" style="left:681px;top:108px;font-size:11px;color:#2a2a2a;font-weight:normal;transform:translateY(-50%) scaleX(0.9435);">Global</span><div class="rd" style="left:666.25px;top:121.25px;"></div><span class="t" style="left:681px;top:127.5px;font-size:11px;color:#2a2a2a;font-weight:normal;transform:translateY(-50%) scaleX(0.9321);">Per-Net/Pin</span><div style="position:absolute;left:659px;top:140px;width:171px;height:1px;background:#e2e2e2;"></div><div style="position:absolute;left:734px;top:141px;width:1px;height:46px;background:#d0d0d0;"></div><div class="rd" style="left:664.75px;top:149.25px;"></div><span class="t" style="left:680px;top:155.5px;font-size:11px;color:#2a2a2a;font-weight:normal;transform:translateY(-50%) scaleX(0.9337);">Edge</span><div class="rd on" style="left:664.75px;top:168.25px;"></div><span class="t" style="left:679.5px;top:174.5px;font-size:11px;color:#2a2a2a;font-weight:normal;transform:translateY(-50%) scaleX(0.9271);">Oscillator</span><span class="t" style="left:746.5px;top:150px;font-size:11px;color:#2a2a2a;font-weight:normal;transform:translateY(-50%) scaleX(0.8846);">MHz</span><div class="wh" style="left:769px;top:143px;width:52px;height:18px;"></div><span class="t" style="left:771.5px;top:152px;font-size:11px;color:#2a2a2a;font-weight:normal;transform:translateY(-50%) scaleX(0.8987);">100</span><span class="t" style="left:746.5px;top:174.5px;font-size:11px;color:#2a2a2a;font-weight:normal;transform:translateY(-50%) scaleX(0.9503);">Duty</span><div class="wh" style="left:769px;top:166px;width:30px;height:19px;"></div><span class="t" style="left:779px;top:175.5px;font-size:11px;color:#2a2a2a;font-weight:normal;transform:translateY(-50%) scaleX(0.8169);">49.0</span><span class="t" style="left:800.7px;top:174.5px;font-size:11px;color:#2a2a2a;font-weight:normal;transform:translateY(-50%) scaleX(0.8486);">%</span><div class="btn" style="left:842.5px;top:52px;width:99px;height:19.5px;border-color:#3c7fb1;background:linear-gradient(#eaf6fd 0%,#d9f0fc 48%,#bee6fd 52%,#a7d9f5 100%);box-shadow:inset 0 0 0 1px #46d8fb55, inset 0 0 0 2px rgba(255,255,255,.5);"></div><span class="t" style="left:862px;top:61.5px;font-size:11px;color:#16222e;font-weight:normal;transform:translateY(-50%) scaleX(0.9018);">Start Sweeps</span><div class="gb" style="left:836px;top:82.5px;width:106px;height:45.5px;"></div><div style="position:absolute;left:840.5px;top:76.5px;width:45.5px;height:12.0px;background:#f0f0f0;"></div><span class="t" style="left:842.5px;top:82.5px;font-size:11px;color:#2a2a2a;font-weight:normal;transform:translateY(-50%) scaleX(0.8931);">Simulator</span><div class="cmb" style="left:841px;top:90.5px;width:96.5px;height:17px;"></div><div class="arr" style="left:927px;top:97.5px;"></div><span class="t" style="left:844px;top:99px;font-size:11px;color:#2a2a2a;font-weight:normal;transform:translateY(-50%) scaleX(0.8613);">Auto</span><div class="cb" style="left:841px;top:112px;"></div><span class="t" style="left:855px;top:117.5px;font-size:11px;color:#2a2a2a;font-weight:normal;transform:translateY(-50%) scaleX(0.8941);">Simulate t-planes</span><div class="gb" style="left:836px;top:132px;width:106px;height:35.5px;"></div><div style="position:absolute;left:841px;top:126px;width:76.5px;height:12px;background:#f0f0f0;"></div><span class="t" style="left:843px;top:132px;font-size:11px;color:#2a2a2a;font-weight:normal;transform:translateY(-50%) scaleX(0.9168);">Time Resolution</span><div class="rd on" style="left:839.75px;top:146.25px;"></div><span class="t" style="left:855px;top:152.5px;font-size:11px;color:#2a2a2a;font-weight:normal;transform:translateY(-50%) scaleX(0.8392);">Auto</span><div class="rd" style="left:881.75px;top:146.25px;"></div><div class="wh" style="left:897px;top:143px;width:28px;height:19px;background:#f4f4f4;border-color:#c4c4c4;"></div><span class="t" style="left:900.5px;top:152.5px;font-size:11px;color:#9a9a9a;font-weight:normal;transform:translateY(-50%) scaleX(0.8571);">10</span><span class="t" style="left:927.5px;top:152.5px;font-size:11px;color:#2a2a2a;font-weight:normal;transform:translateY(-50%) scaleX(0.9032);">ps</span><div class="btn" style="left:845.5px;top:172.5px;width:89px;height:20.5px;"></div><span class="t" style="left:854px;top:183px;font-size:11px;color:#2a2a2a;font-weight:normal;transform:translateY(-50%) scaleX(0.8598);">SPICE Options...</span><div class="gb" style="left:660px;top:200px;width:282px;height:26px;"></div><div style="position:absolute;left:662px;top:194px;width:57.299999999999955px;height:12px;background:#f0f0f0;"></div><span class="t" style="left:664.2px;top:200px;font-size:11px;color:#2a2a2a;font-weight:normal;transform:translateY(-50%) scaleX(0.9046);">IC modeling</span><div class="rd" style="left:664.75px;top:209.25px;"></div><span class="t" style="left:679.7px;top:215.5px;font-size:11px;color:#2a2a2a;font-weight:normal;transform:translateY(-50%) scaleX(0.9254);">Slow-Weak</span><div class="rd on" style="left:760.75px;top:209.25px;"></div><span class="t" style="left:776px;top:215.5px;font-size:11px;color:#2a2a2a;font-weight:normal;transform:translateY(-50%) scaleX(0.9635);">Typical</span><div class="rd" style="left:839.75px;top:209.25px;"></div><span class="t" style="left:855px;top:215.5px;font-size:11px;color:#2a2a2a;font-weight:normal;transform:translateY(-50%) scaleX(0.8874);">Fast-Strong</span><div class="gb" style="left:660px;top:237px;width:282px;height:255px;"></div><div style="position:absolute;left:662px;top:231px;width:29px;height:12px;background:#f0f0f0;"></div><span class="t" style="left:664px;top:237px;font-size:11px;color:#2a2a2a;font-weight:normal;transform:translateY(-50%) scaleX(0.9081);">Show</span><div class="cb" style="left:665px;top:246.5px;"></div><span class="t" style="left:679.7px;top:252.7px;font-size:11px;color:#2a2a2a;font-weight:normal;transform:translateY(-50%) scaleX(0.9118);">Overview pane</span><div class="cb on" style="left:665px;top:260px;"></div><span class="t" style="left:679.7px;top:266.3px;font-size:11px;color:#2a2a2a;font-weight:normal;transform:translateY(-50%) scaleX(0.8978);">Readout text</span><div class="cb" style="left:665px;top:287px;"></div><span class="t" style="left:679.7px;top:293px;font-size:11px;color:#2a2a2a;font-weight:normal;transform:translateY(-50%) scaleX(0.9145);">Loaded results</span><div class="cb on" style="left:665px;top:301px;"></div><span class="t" style="left:679.5px;top:307.3px;font-size:11px;color:#2a2a2a;font-weight:normal;transform:translateY(-50%) scaleX(0.9008);">Previous results</span><div class="cb on" style="left:665px;top:314.5px;"></div><span class="t" style="left:679.5px;top:320.7px;font-size:11px;color:#2a2a2a;font-weight:normal;transform:translateY(-50%) scaleX(0.8866);">Latest results</span><div class="gb" style="left:668.5px;top:336.5px;width:89.5px;height:38.0px;"></div><div style="position:absolute;left:671.5px;top:330.5px;width:40.5px;height:12.0px;background:#f0f0f0;"></div><span class="t" style="left:673.5px;top:336.5px;font-size:11px;color:#2a2a2a;font-weight:normal;transform:translateY(-50%) scaleX(0.9233);">Visibility</span><div class="rd on" style="left:675.25px;top:346.45px;"></div><span class="t" style="left:690px;top:352.7px;font-size:11px;color:#2a2a2a;font-weight:normal;transform:translateY(-50%) scaleX(0.9400);">Voltage</span><div class="rd" style="left:675.25px;top:359.75px;"></div><span class="t" style="left:690px;top:366px;font-size:11px;color:#2a2a2a;font-weight:normal;transform:translateY(-50%) scaleX(0.8586);">Current</span><div class="gb" style="left:667px;top:384.3px;width:91.29999999999995px;height:35.69999999999999px;"></div><div style="position:absolute;left:671.3px;top:378.3px;width:30.700000000000045px;height:12.0px;background:#f0f0f0;"></div><span class="t" style="left:673.3px;top:384.3px;font-size:11px;color:#2a2a2a;font-weight:normal;transform:translateY(-50%) scaleX(0.9493);">Zoom</span><div class="btn" style="left:680.5px;top:394px;width:26.5px;height:19.5px;"></div><div class="btn" style="left:719.5px;top:394px;width:26.5px;height:19.5px;"></div><svg style="position:absolute;left:686px;top:396px" width="16" height="16" viewBox="0 0 16 16"><circle cx="9" cy="6.5" r="4.4" fill="#fff" stroke="#111" stroke-width="1.5"/><path d="M5.8 9.8L2 14" stroke="#111" stroke-width="2.4" stroke-linecap="round"/><path d="M6.8 6.5H11.2M9 4.3V8.7" stroke="#111" stroke-width="1.4"/></svg><svg style="position:absolute;left:726px;top:397px" width="14" height="14" viewBox="0 0 14 14"><rect x="1" y="1" width="12" height="12" fill="#fff" stroke="#222" stroke-width="1.3"/><path d="M7 3V11M3 7H11" stroke="#222" stroke-width="1.2"/><path d="M3 3L5.2 5.2M11 3L8.8 5.2M3 11L5.2 8.8M11 11L8.8 8.8" stroke="#222" stroke-width="1.2"/></svg><svg style="position:absolute;left:815px;top:240px" width="12" height="17" viewBox="0 0 12 17"><path d="M1 1V13L4 10.3L6.2 15.5L8.2 14.6L6 9.6H10Z" fill="#fff" stroke="#222" stroke-width="1" stroke-linejoin="round"/></svg><span class="t" style="left:770.6px;top:253.7px;font-size:11px;color:#2a2a2a;font-weight:normal;transform:translateY(-50%) scaleX(0.9071);">Probes:</span><span class="t" style="left:778px;top:272px;font-size:11px;color:#2a2a2a;font-weight:normal;transform:translateY(-50%) scaleX(0.9004);">Located:</span><div class="cmb" style="left:778px;top:279.5px;width:158.5px;height:17px;"></div><div class="arr" style="left:925px;top:286.5px;"></div><span class="t" style="left:781px;top:288px;font-size:11px;color:#2a2a2a;font-weight:normal;transform:translateY(-50%) scaleX(0.8658);">Always at the pin</span><div class="btn" style="left:751px;top:430px;width:14px;height:12px;border-radius:2px;"></div><div style="position:absolute;left:756.5px;top:433px;width:0;height:0;border-top:3px solid transparent;border-bottom:3px solid transparent;border-left:3.5px solid #111;"></div><div class="btn" style="left:751px;top:445.5px;width:14px;height:13px;border-radius:2px;"></div><div style="position:absolute;left:757px;top:451px;width:2px;height:2px;background:#111;border-radius:50%;"></div><span class="t" style="left:666.7px;top:456.7px;font-size:11px;color:#2a2a2a;font-weight:normal;transform:translateY(-50%) scaleX(0.8995);">Thresholds for:</span><div class="cmb" style="left:666.7px;top:468.5px;width:96px;height:17.5px;"></div><div class="arr" style="left:750.5px;top:475.5px;"></div><span class="t" style="left:669.5px;top:477.5px;font-size:11px;color:#2a2a2a;font-weight:normal;transform:translateY(-50%) scaleX(0.8966);">All IC Pins</span><div style="position:absolute;left:765px;top:469px;width:171.5px;height:19.5px;box-sizing:border-box;border:1px solid #d9d9d9;border-top-color:#bcbcbc;background:linear-gradient(90deg,#f1f1f1 0,#f1f1f1 154px,#fff 154px);"></div><div class="arr" style="left:924.5px;top:477px;border-top-color:#555;"></div><div style="position:absolute;left:769px;top:306.5px;width:166px;height:153.0px;background:#fff;border:1px solid #a9acb2;box-sizing:border-box;"></div><div style="position:absolute;left:770px;top:307.5px;width:149px;height:17.5px;background:linear-gradient(#ffffff,#f3f4f6);border-bottom:1px solid #dcdfe4;box-sizing:border-box;"></div><div style="position:absolute;left:902px;top:308px;width:1px;height:16px;background:#dfe2e6;"></div><span class="t" style="left:775px;top:316.7px;font-size:11px;color:#2a2a2a;font-weight:normal;transform:translateY(-50%) scaleX(0.8409);">Pins</span><span class="t" style="left:905.7px;top:316.7px;font-size:11px;color:#2a2a2a;font-weight:normal;transform:translateY(-50%) scaleX(0.9430);">C</span><div style="position:absolute;left:919px;top:307.5px;width:15px;height:151.0px;background:#f1f1f1;"></div><div style="position:absolute;left:922px;top:314px;width:0;height:0;border-left:3.5px solid transparent;border-right:3.5px solid transparent;border-bottom:4px solid #222;"></div><div style="position:absolute;left:922px;top:449px;width:0;height:0;border-left:3.5px solid transparent;border-right:3.5px solid transparent;border-top:4px solid #333;"></div><div style="position:absolute;left:920.5px;top:325px;width:12.0px;height:39px;border:1px solid #9a9a9a;border-radius:2px;box-sizing:border-box;background:linear-gradient(90deg,#f4f4f4 0%,#e6e6e6 45%,#d4d4d4 55%,#cdcdcd 100%);"></div><div style="position:absolute;left:923.5px;top:341px;width:6.0px;height:1px;background:#7a7a7a;"></div><div style="position:absolute;left:923.5px;top:344px;width:6.0px;height:1px;background:#7a7a7a;"></div><div style="position:absolute;left:923.5px;top:347px;width:6.0px;height:1px;background:#7a7a7a;"></div><div style="position:absolute;left:770px;top:340.5px;width:149px;height:1.0px;background:#eef0f2;"></div><div style="position:absolute;left:770px;top:355.65px;width:149px;height:1.0px;background:#eef0f2;"></div><div style="position:absolute;left:770px;top:370.8px;width:149px;height:1.0px;background:#eef0f2;"></div><div style="position:absolute;left:770px;top:385.65px;width:149px;height:1.0px;background:#eef0f2;"></div><div style="position:absolute;left:770px;top:400.6px;width:149px;height:1.0px;background:#eef0f2;"></div><div style="position:absolute;left:770px;top:415.75px;width:149px;height:1.0px;background:#eef0f2;"></div><div style="position:absolute;left:770px;top:430.70000000000005px;width:149px;height:1.0px;background:#eef0f2;"></div><div style="position:absolute;left:770px;top:445.6px;width:149px;height:1.0px;background:#eef0f2;"></div><div style="position:absolute;left:788.5px;top:340px;width:1.0px;height:118px;background:repeating-linear-gradient(#b8b8b8 0 1px,transparent 1px 2px);"></div><div style="position:absolute;left:800px;top:355px;width:1px;height:24px;background:repeating-linear-gradient(#b8b8b8 0 1px,transparent 1px 2px);"></div><div style="position:absolute;left:800px;top:400px;width:1px;height:58px;background:repeating-linear-gradient(#b8b8b8 0 1px,transparent 1px 2px);"></div><div style="position:absolute;left:772.2px;top:328.5px;width:9.0px;height:9.0px;border:1px solid #c6cace;border-radius:1.5px;box-sizing:border-box;background:#fdfdfd;"></div><div style="position:absolute;left:774.2px;top:332.5px;width:5.0px;height:1.0px;background:#444;"></div><div class="cb" style="left:782.6px;top:327px;"></div><span class="t" style="left:801.8px;top:333px;font-size:11px;color:#2a2a2a;font-weight:normal;transform:translateY(-50%) scaleX(0.9121);">Latest Sweep Wav...</span><div style="position:absolute;left:784.1px;top:343.5px;width:9.0px;height:9.0px;border:1px solid #c6cace;border-radius:1.5px;box-sizing:border-box;background:#fdfdfd;"></div><div style="position:absolute;left:786.1px;top:347.5px;width:5.0px;height:1.0px;background:#444;"></div><svg style="position:absolute;left:794.5px;top:342.5px" width="12" height="11" viewBox="0 0 12 11"><rect x="0.5" y="2.5" width="11" height="6" rx="1.8" fill="#4a4a4a"/><path d="M2.5 0.5V2.5M5 0.5V2.5M7.5 0.5V2.5M10 0.5V2.5M2.5 8.5V10.5M5 8.5V10.5M7.5 8.5V10.5M10 8.5V10.5" stroke="#6a6a6a" stroke-width="1.1"/></svg><span class="t" style="left:814px;top:348px;font-size:11px;color:#2a2a2a;font-weight:normal;transform:translateY(-50%) scaleX(0.8768);">U18</span><div style="position:absolute;left:795.8px;top:358.8px;width:9.0px;height:9.0px;border:1px solid #c6cace;border-radius:1.5px;box-sizing:border-box;background:#fdfdfd;"></div><div style="position:absolute;left:797.8px;top:362.8px;width:5.0px;height:1.0px;background:#888;"></div><div style="position:absolute;left:799.8px;top:360.8px;width:1.0px;height:5.0px;background:#888;"></div><div style="position:absolute;left:799.0999999999999px;top:362.1px;width:2.400000000000091px;height:2.3999999999999773px;background:#222;border-radius:50%;"></div><svg style="position:absolute;left:808px;top:358.3px" width="11" height="10" viewBox="0 0 11 10"><path d="M0 5H4" stroke="#222" stroke-width="1"/><path d="M4 1L9.5 5L4 9Z" fill="#fff" stroke="#222" stroke-width="1"/></svg><div class="cb on" style="left:818.5px;top:357.3px;"></div><span class="t" style="left:837.3px;top:363.5px;font-size:11px;color:#2a2a2a;font-weight:normal;transform:translateY(-50%) scaleX(0.8768);">A2 (at pin)</span><div style="position:absolute;left:902px;top:355.5px;width:16px;height:13.699999999999989px;background:#f51d78;"></div><div style="position:absolute;left:795.8px;top:373.8px;width:9.0px;height:9.0px;border:1px solid #c6cace;border-radius:1.5px;box-sizing:border-box;background:#fdfdfd;"></div><div style="position:absolute;left:797.8px;top:377.8px;width:5.0px;height:1.0px;background:#888;"></div><div style="position:absolute;left:799.8px;top:375.8px;width:1.0px;height:5.0px;background:#888;"></div><div style="position:absolute;left:799.0999999999999px;top:377.1px;width:2.400000000000091px;height:2.3999999999999773px;background:#222;border-radius:50%;"></div><svg style="position:absolute;left:808px;top:373.3px" width="11" height="10" viewBox="0 0 11 10"><path d="M0 5H4" stroke="#222" stroke-width="1"/><path d="M4 1L9.5 5L4 9Z" fill="#fff" stroke="#222" stroke-width="1"/></svg><div class="cb on" style="left:818.5px;top:372.3px;"></div><span class="t" style="left:837.3px;top:378.5px;font-size:11px;color:#2a2a2a;font-weight:normal;transform:translateY(-50%) scaleX(0.8768);">A6 (at pin)</span><div style="position:absolute;left:902px;top:370.8px;width:16px;height:13.800000000000011px;background:#3838f4;"></div><div style="position:absolute;left:784.1px;top:388.5px;width:9.0px;height:9.0px;border:1px solid #c6cace;border-radius:1.5px;box-sizing:border-box;background:#fdfdfd;"></div><div style="position:absolute;left:786.1px;top:392.5px;width:5.0px;height:1.0px;background:#444;"></div><svg style="position:absolute;left:794.5px;top:387.5px" width="12" height="11" viewBox="0 0 12 11"><rect x="0.5" y="2.5" width="11" height="6" rx="1.8" fill="#4a4a4a"/><path d="M2.5 0.5V2.5M5 0.5V2.5M7.5 0.5V2.5M10 0.5V2.5M2.5 8.5V10.5M5 8.5V10.5M7.5 8.5V10.5M10 8.5V10.5" stroke="#6a6a6a" stroke-width="1.1"/></svg><span class="t" style="left:814px;top:393px;font-size:11px;color:#2a2a2a;font-weight:normal;transform:translateY(-50%) scaleX(0.8768);">U21</span><div style="position:absolute;left:795.8px;top:403.7px;width:9.0px;height:9.0px;border:1px solid #c6cace;border-radius:1.5px;box-sizing:border-box;background:#fdfdfd;"></div><div style="position:absolute;left:797.8px;top:407.7px;width:5.0px;height:1.0px;background:#888;"></div><div style="position:absolute;left:799.8px;top:405.7px;width:1.0px;height:5.0px;background:#888;"></div><div style="position:absolute;left:799.0999999999999px;top:407.0px;width:2.400000000000091px;height:2.3999999999999773px;background:#222;border-radius:50%;"></div><svg style="position:absolute;left:807.5px;top:403.2px" width="11" height="10" viewBox="0 0 11 10"><path d="M1 1L6.5 5L1 9Z" fill="#fff" stroke="#222" stroke-width="1"/><path d="M6.5 5H10.5" stroke="#222" stroke-width="1"/></svg><div class="cb" style="left:818.5px;top:402.2px;"></div><span class="t" style="left:837.7px;top:408.4px;font-size:11px;color:#2a2a2a;font-weight:normal;transform:translateY(-50%) scaleX(0.8750);">D22 (at pin)</span><div style="position:absolute;left:902px;top:400.59999999999997px;width:16px;height:13.800000000000011px;background:#00d67a;"></div><div style="position:absolute;left:795.8px;top:418.8px;width:9.0px;height:9.0px;border:1px solid #c6cace;border-radius:1.5px;box-sizing:border-box;background:#fdfdfd;"></div><div style="position:absolute;left:797.8px;top:422.8px;width:5.0px;height:1.0px;background:#888;"></div><div style="position:absolute;left:799.8px;top:420.8px;width:1.0px;height:5.0px;background:#888;"></div><div style="position:absolute;left:799.0999999999999px;top:422.1px;width:2.400000000000091px;height:2.3999999999999773px;background:#222;border-radius:50%;"></div><svg style="position:absolute;left:807.5px;top:418.3px" width="11" height="10" viewBox="0 0 11 10"><path d="M1 1L6.5 5L1 9Z" fill="#fff" stroke="#222" stroke-width="1"/><path d="M6.5 5H10.5" stroke="#222" stroke-width="1"/></svg><div class="cb" style="left:818.5px;top:417.3px;"></div><span class="t" style="left:837.7px;top:423.5px;font-size:11px;color:#2a2a2a;font-weight:normal;transform:translateY(-50%) scaleX(0.8750);">D23 (at pin)</span><div style="position:absolute;left:902px;top:415.7px;width:16px;height:13.800000000000011px;background:#ffee00;"></div><div style="position:absolute;left:795.8px;top:433.6px;width:9.0px;height:9.0px;border:1px solid #c6cace;border-radius:1.5px;box-sizing:border-box;background:#fdfdfd;"></div><div style="position:absolute;left:797.8px;top:437.6px;width:5.0px;height:1.0px;background:#888;"></div><div style="position:absolute;left:799.8px;top:435.6px;width:1.0px;height:5.0px;background:#888;"></div><div style="position:absolute;left:799.0999999999999px;top:436.90000000000003px;width:2.400000000000091px;height:2.3999999999999773px;background:#222;border-radius:50%;"></div><svg style="position:absolute;left:807.5px;top:433.1px" width="11" height="10" viewBox="0 0 11 10"><path d="M1 1L6.5 5L1 9Z" fill="#fff" stroke="#222" stroke-width="1"/><path d="M6.5 5H10.5" stroke="#222" stroke-width="1"/></svg><div class="cb" style="left:818.5px;top:432.1px;"></div><span class="t" style="left:837.7px;top:438.3px;font-size:11px;color:#2a2a2a;font-weight:normal;transform:translateY(-50%) scaleX(0.8750);">D24 (at pin)</span><div style="position:absolute;left:902px;top:430.5px;width:16px;height:13.800000000000011px;background:#ff28f0;"></div><div style="position:absolute;left:795.8px;top:448.6px;width:9.0px;height:9.0px;border:1px solid #c6cace;border-radius:1.5px;box-sizing:border-box;background:#fdfdfd;"></div><div style="position:absolute;left:797.8px;top:452.6px;width:5.0px;height:1.0px;background:#888;"></div><div style="position:absolute;left:799.8px;top:450.6px;width:1.0px;height:5.0px;background:#888;"></div><div style="position:absolute;left:799.0999999999999px;top:451.90000000000003px;width:2.400000000000091px;height:2.3999999999999773px;background:#222;border-radius:50%;"></div><svg style="position:absolute;left:807.5px;top:448.1px" width="11" height="10" viewBox="0 0 11 10"><path d="M1 1L6.5 5L1 9Z" fill="#fff" stroke="#222" stroke-width="1"/><path d="M6.5 5H10.5" stroke="#222" stroke-width="1"/></svg><div class="cb on" style="left:818.5px;top:447.1px;"></div><span class="t" style="left:837.7px;top:453.3px;font-size:11px;color:#2a2a2a;font-weight:normal;transform:translateY(-50%) scaleX(0.8942);">F23 (at pin)</span><div style="position:absolute;left:902px;top:445.5px;width:16px;height:13.0px;background:#0a78ff;"></div><div class="btn" style="left:857px;top:505px;width:83.5px;height:17px;"></div><span class="t" style="left:866px;top:513.3px;font-size:11px;color:#2a2a2a;font-weight:normal;transform:translateY(-50%) scaleX(0.9793);">Save/Load...</span><div class="btn" style="left:857px;top:524px;width:83.5px;height:19px;"></div><span class="t" style="left:871.5px;top:533.3px;font-size:11px;color:#2a2a2a;font-weight:normal;transform:translateY(-50%) scaleX(0.9262);">Copy to Clip</span><div style="position:absolute;left:652.5px;top:494px;width:1.0px;height:46px;background:#e0e0e0;"></div><div style="position:absolute;left:753px;top:494px;width:1px;height:46px;background:#e0e0e0;"></div><div style="position:absolute;left:687px;top:531px;width:36px;height:36px;margin-left:-1px;border-radius:50%;border:2px dotted #bdbdbd;box-sizing:border-box;background:radial-gradient(circle,#fdfdfd 0%,#ececec 70%);"></div><div style="position:absolute;left:783px;top:531px;width:36px;height:36px;margin-left:-1px;border-radius:50%;border:2px dotted #bdbdbd;box-sizing:border-box;background:radial-gradient(circle,#fdfdfd 0%,#ececec 70%);"></div><div style="position:absolute;left:80px;top:500px;width:799.5px;height:29.5px;background:linear-gradient(#3d3d40,#333335);border-radius:3.5px;"></div><div style="position:absolute;left:93.75px;top:508px;width:4.5px;height:13.75px;background:linear-gradient(#e4e4e4,#8c8c8c);"></div><div style="position:absolute;left:101.75px;top:508px;width:4.5px;height:13.75px;background:linear-gradient(#e4e4e4,#8c8c8c);"></div><span class="t" style="left:117px;top:515.3px;font-size:11px;color:#dedede;font-weight:normal;transform:translateY(-50%) scaleX(0.9807);">03:05</span><div style="position:absolute;left:152.5px;top:510.5px;width:573.5px;height:9.0px;background:#222224;border-radius:4.5px;box-shadow:0 1px 0 rgba(255,255,255,.10), inset 0 1px 1px rgba(0,0,0,.5);"></div><div style="position:absolute;left:152.5px;top:510.5px;width:456.5px;height:9.0px;background:linear-gradient(#ffffff 0%,#e8e8e8 30%,#a8a8a8 100%);border-radius:4.5px;"></div><div style="position:absolute;left:601px;top:508.5px;width:13px;height:13.0px;background:radial-gradient(circle at 50% 35%,#ffffff 0%,#e2e2e2 60%,#b4b4b4 100%);border-radius:50%;"></div><span class="t" style="left:734px;top:515.3px;font-size:11px;color:#dedede;font-weight:normal;transform:translateY(-50%) scaleX(0.9807);">03:52</span><div style="position:absolute;left:771px;top:509.3px;width:19px;height:11.699999999999989px;background:linear-gradient(#f4f4f4,#cfcfcf);border-radius:2.5px;"></div><span class="t" style="left:775px;top:515.4px;font-size:8.5px;color:#222;font-weight:bold;transform:translateY(-50%) scaleX(0.9364);">HD</span><div style="position:absolute;left:800px;top:509.3px;width:19px;height:11.699999999999989px;background:#1d1d1e;border-radius:2.5px;border:1px solid #262627;box-sizing:border-box;"></div><span class="t" style="left:803.5px;top:515.4px;font-size:8.5px;color:#4a4a4c;font-weight:normal;transform:translateY(-50%) scaleX(0.9771);">CC</span><svg style="position:absolute;left:828px;top:508px" width="19" height="15" viewBox="0 0 19 15"><path d="M0.5 5H3.5L8 1.2V13.8L3.5 10H0.5Z" fill="#c9c9c9"/><path d="M10.3 5.2Q11.8 7.5 10.3 9.8" stroke="#c9c9c9" stroke-width="1.3" fill="none"/><path d="M12.6 3.6Q15 7.5 12.6 11.4" stroke="#b5b5b5" stroke-width="1.3" fill="none"/><path d="M15 2Q18.4 7.5 15 13" stroke="#9a9a9a" stroke-width="1.3" fill="none"/></svg><svg style="position:absolute;left:855px;top:509px" width="13" height="13" viewBox="0 0 13 13"><path d="M7.5 0.5H12.5V5.5L10.8 3.8L8.3 6.3L6.7 4.7L9.2 2.2Z" fill="#d0d0d0"/><path d="M5.5 12.5H0.5V7.5L2.2 9.2L4.7 6.7L6.3 8.3L3.8 10.8Z" fill="#d0d0d0"/></svg><div style="position:absolute;left:0px;top:540px;width:960px;height:10px;background:#f3f3f3;"></div><div style="position:absolute;left:956px;top:540px;width:4px;height:10px;background:#fbfbfb;"></div><div style="position:absolute;left:6px;top:534px;width:21px;height:1.2000000000000455px;background:#8f8398;"></div><div style="position:absolute;left:0px;top:535px;width:5px;height:5px;background:radial-gradient(circle at 100% 0%,rgba(0,0,0,0) 0,rgba(0,0,0,0) 3.6px,#6a5a70 4.6px,#2a2230 6px);"></div>
<div style="position:absolute;left:0;top:0;width:960px;height:550px;backdrop-filter:blur(1px);-webkit-backdrop-filter:blur(1px);opacity:0.5;pointer-events:none;"></div>
</div></body></html>
